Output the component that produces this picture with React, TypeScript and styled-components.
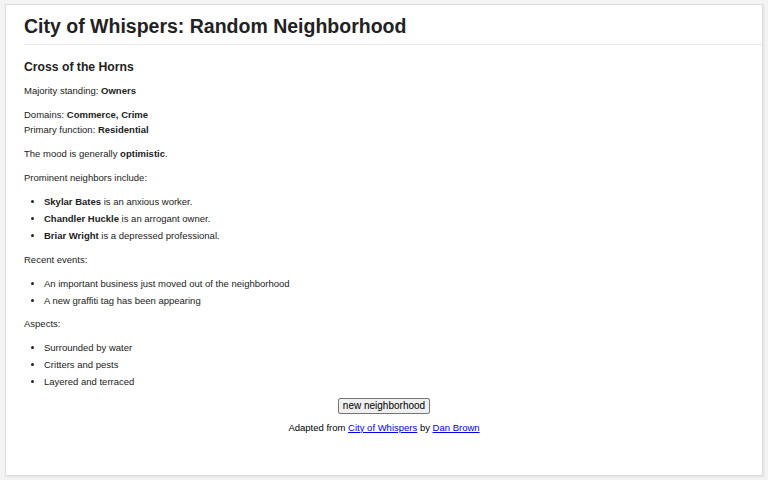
import React from "react";
import styled, { createGlobalStyle } from "styled-components";

const Global = createGlobalStyle`
  html, body { margin: 0; padding: 0; }
  body {
    background: #f3f3f3;
    font-family: "Liberation Sans", Arial, sans-serif;
    color: #222;
  }
`;

const Page = styled.div`
  padding: 4px 5px 4px 5px;
  box-sizing: border-box;
  min-height: 100vh;
  display: flex;
`;

const Card = styled.main`
  flex: 1;
  background: #fff;
  border: 1px solid #dcdcdc;
  box-shadow: 1px 1px 2px rgba(0, 0, 0, 0.08);
  padding: 10px 0 20px 18px;
  display: flex;
  flex-direction: column;
`;

const Title = styled.h1`
  margin: 0;
  padding: 0 0 6px 0;
  font-size: 19.5px;
  line-height: 23px;
  font-weight: bold;
  color: #222;
  border-bottom: 1px solid #e8e8e8;
`;

const Body = styled.section`
  padding-right: 18px;
  font-size: 9.5px;
  line-height: 15px;
  color: #222;
`;

const Subtitle = styled.h2`
  margin: 15px 0 8px;
  font-size: 12.2px;
  line-height: 15px;
  font-weight: bold;
  color: #222;
`;

const P = styled.p`
  margin: 0 0 9px;
`;

const List = styled.ul`
  margin: 0 0 8.5px;
  padding-left: 20px;
`;

const Item = styled.li`
  line-height: 15px;
  & + & {
    margin-top: 2px;
  }
`;

const Center = styled.div`
  display: flex;
  flex-direction: column;
  align-items: center;
  margin: 2px -18px 0;
`;

const Button = styled.button`
  font-family: "Liberation Sans", Arial, sans-serif;
  font-size: 10px;
  line-height: 12px;
  padding: 1px 4px;
  color: #000;
  background: #efefef;
  border: 1px solid #767676;
  border-radius: 2px;
`;

const Footer = styled.p`
  margin: 6px 0 0;
  font-size: 9.5px;
  line-height: 15px;
  color: #000;
`;

const Link = styled.a`
  color: #0000ee;
  text-decoration: underline;
`;

export default function App() {
  return (
    <>
      <Global />
      <Page>
        <Card>
          <Title>City of Whispers: Random Neighborhood</Title>
          <Body>
            <Subtitle>Cross of the Horns</Subtitle>
            <P>
              Majority standing: <b>Owners</b>
            </P>
            <P>
              Domains: <b>Commerce, Crime</b>
              <br />
              Primary function: <b>Residential</b>
            </P>
            <P>
              The mood is generally <b>optimistic</b>.
            </P>
            <P>Prominent neighbors include:</P>
            <List>
              <Item>
                <b>Skylar Bates</b> is an anxious worker.
              </Item>
              <Item>
                <b>Chandler Huckle</b> is an arrogant owner.
              </Item>
              <Item>
                <b>Briar Wright</b> is a depressed professional.
              </Item>
            </List>
            <P>Recent events:</P>
            <List>
              <Item>An important business just moved out of the neighborhood</Item>
              <Item>A new graffiti tag has been appearing</Item>
            </List>
            <P>Aspects:</P>
            <List>
              <Item>Surrounded by water</Item>
              <Item>Critters and pests</Item>
              <Item>Layered and terraced</Item>
            </List>
            <Center>
              <Button>new neighborhood</Button>
              <Footer>
                Adapted from <Link href="#">City of Whispers</Link> by{" "}
                <Link href="#">Dan Brown</Link>
              </Footer>
            </Center>
          </Body>
        </Card>
      </Page>
    </>
  );
}
